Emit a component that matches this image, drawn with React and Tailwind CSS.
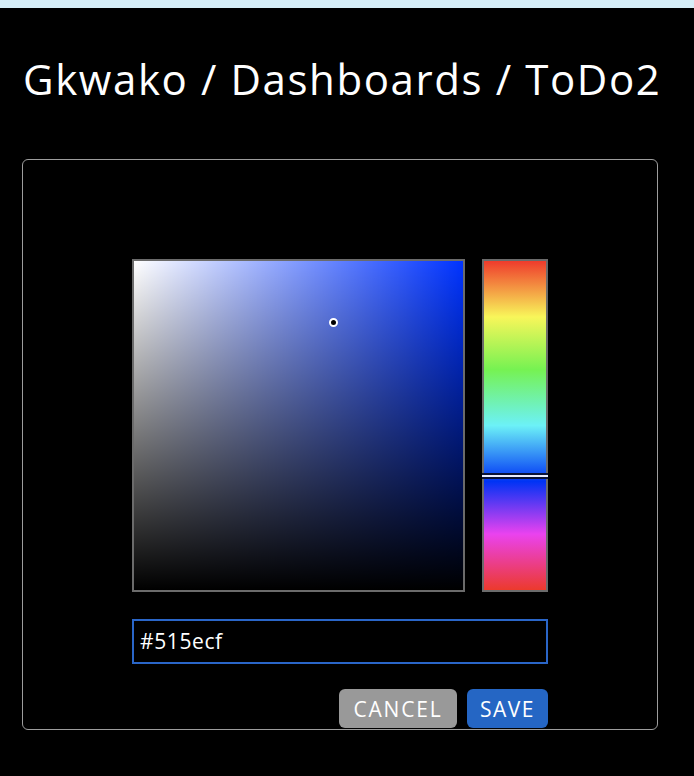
import React, { useState } from "react";

const font = { fontFamily: "'Open Sans', Lato, sans-serif" };

const ColorPicker = ({ hex }) => {
  return (
    <div className="flex flex-col items-center pt-[99px]">
      <div className="flex gap-[17px]">
        {/* saturation / value square */}
        <div className="relative w-[333px] h-[333px] border-2 border-[#6b6b6b] bg-[#0033ff] bg-[linear-gradient(to_top,#000,transparent),linear-gradient(to_right,#fff,transparent)]">
          <div className="absolute left-[195px] top-[57px] w-[9px] h-[9px] rounded-full border-2 border-white bg-black" />
        </div>
        {/* hue bar */}
        <div className="relative w-[66px] h-[333px] border-2 border-[#6b6b6b] bg-[linear-gradient(to_bottom,#ef3b2c_0%,#f8f65a_17%,#76f252_33%,#6cf1f7_50%,#0033f5_67%,#ea42ef_83%,#ec3a2c_100%)]">
          <div className="absolute left-[-2px] right-[-2px] top-[212px] h-[6px] bg-[#0a1236] flex items-center">
            <div className="w-full h-[2px] bg-[#e8ecff]" />
          </div>
        </div>
      </div>
      <div className="mt-[27px] w-[416px] h-[45px] border-2 border-[#2a66c8] flex items-center px-[6px] text-white text-[21px] tracking-[0.6px]">
        {hex}
      </div>
      <div className="mt-[25px] w-[416px] flex justify-end gap-[10px]">
        <button className="w-[118px] h-[39px] rounded-md bg-[#999999] text-white text-[21px] tracking-[1.8px] uppercase pt-[2px]">
          Cancel
        </button>
        <button className="w-[81px] h-[39px] rounded-md bg-[#2566c4] text-white text-[21px] tracking-[1.5px] uppercase pt-[2px]">
          Save
        </button>
      </div>
    </div>
  );
};

export default function App() {
  const [hex] = useState("#515ecf");
  return (
    <div className="min-h-screen bg-black" style={font}>
      <div className="h-2 bg-[#d6eef8]" />
      <div className="px-[22px]">
        <h1 className="pt-[47px] text-white text-[42px] leading-[48px] tracking-[1.6px] pl-[1px]">
          Gkwako / Dashboards / ToDo2
        </h1>
        <div className="mt-[56px] w-[636px] h-[571px] border border-[#9d9d9d] rounded-md">
          <ColorPicker hex={hex} />
        </div>
      </div>
    </div>
  );
}
